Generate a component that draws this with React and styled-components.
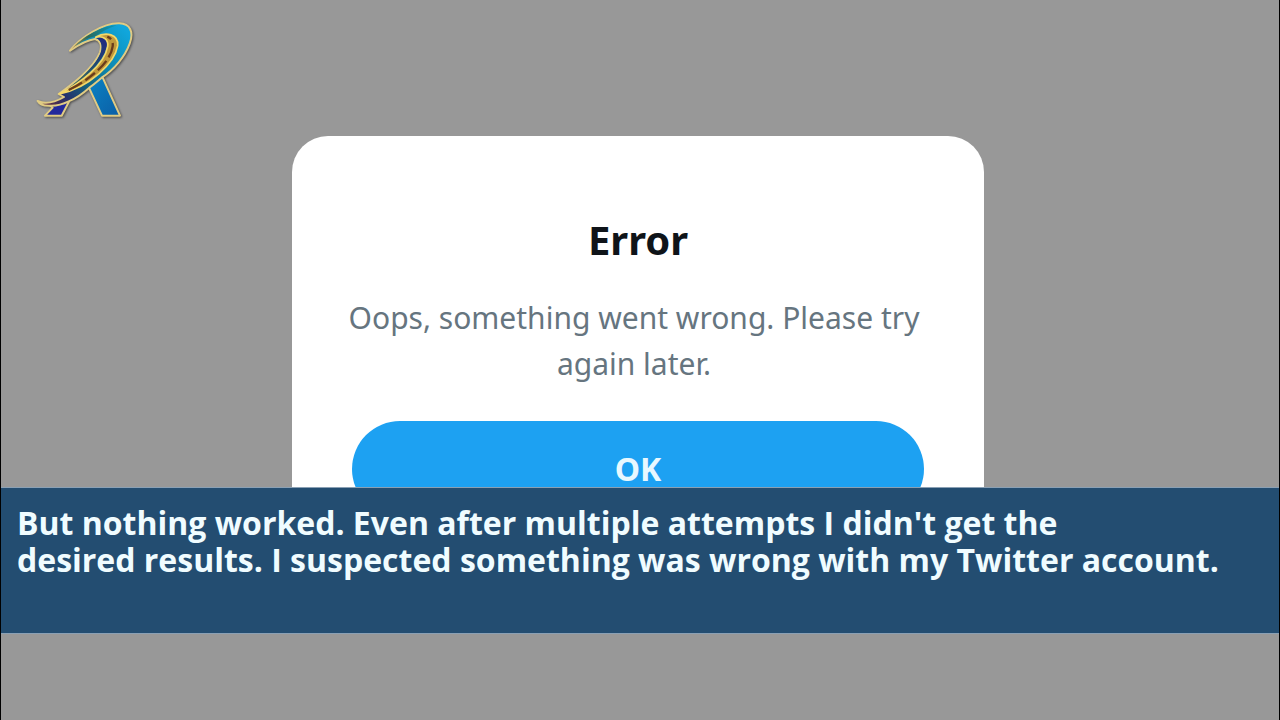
import styled, { createGlobalStyle } from 'styled-components'

const GlobalStyle = createGlobalStyle`
  * {
    box-sizing: border-box;
  }

  body {
    margin: 0;
    background-color: #000000;
    font-family: "Open Sans", "Noto Sans", sans-serif;
  }
`

////////////
// SCENE //
//////////

const Scene = styled.main`
  position: relative;
  display: flex;
  align-items: center;
  justify-content: center;
  min-height: 100vh;
  margin: 0 1px;
  padding-right: 4px;
  overflow: hidden;

  background-color: #989898;
`

const Logo = styled.svg`
  position: absolute;
  top: 15px;
  left: 29px;
  width: 110px;
  height: 110px;
  filter: drop-shadow(1px 1px 1px #00000080);
`

/////////////
// DIALOG //
///////////

const Dialog = styled.section`
  display: flex;
  flex-direction: column;
  width: 692px;
  max-width: 100%;
  padding: 76px 48px 68px;

  font-family: "Noto Sans", sans-serif;
  text-align: center;
  background-color: #ffffff;
  border-radius: 36px;
`

const Title = styled.h1`
  margin: 0;
  font-size: 40px;
  font-weight: 700;
  line-height: 56px;
  color: #0f1419;
`

const Message = styled.p`
  margin: 27px 0 34px;
  padding-right: 8px;
  font-size: 30px;
  line-height: 46px;
  color: #66757f;
`

const OkButton = styled.button`
  height: 96px;
  margin: 0 12px;
  border: 0;
  border-radius: 48px;

  font-family: inherit;
  font-size: 32px;
  font-weight: 700;
  color: #e8f8ff;
  background-color: #1da1f2;
`

//////////////
// CAPTION //
////////////

const Caption = styled.p`
  position: absolute;
  right: 0;
  bottom: 86px;
  left: 0;
  min-height: 147px;
  margin: 0;
  padding: 16px;
  border: solid #8aa0b4;
  border-width: 1px 0;

  font-size: 32px;
  font-weight: 700;
  line-height: 37px;
  color: #f0fcff;
  background-color: #234d71;
`

const RoadLogo = () => {
  return (
    <Logo viewBox="0 0 330 330" role="img" aria-label="R">
      <defs>
        <linearGradient id="swoosh" gradientUnits="userSpaceOnUse" x1="290" y1="50" x2="40" y2="270">
          <stop offset="0" stopColor="#10a6dc" />
          <stop offset="0.35" stopColor="#0d87ae" />
          <stop offset="0.6" stopColor="#14607c" />
          <stop offset="0.8" stopColor="#25306c" />
          <stop offset="1" stopColor="#6a2c3c" />
        </linearGradient>
        <linearGradient id="leg" x1="0" y1="0" x2="1" y2="1">
          <stop offset="0" stopColor="#0a84c4" />
          <stop offset="1" stopColor="#0b5ea6" />
        </linearGradient>
        <linearGradient id="arc" gradientUnits="userSpaceOnUse" x1="120" y1="107" x2="240" y2="40">
          <stop offset="0" stopColor="#c08a38" />
          <stop offset="0.5" stopColor="#2a6a5c" />
          <stop offset="1" stopColor="#0f8fa8" />
        </linearGradient>
        <linearGradient id="shoulder" gradientUnits="userSpaceOnUse" x1="220" y1="75" x2="110" y2="225">
          <stop offset="0" stopColor="#202c80" />
          <stop offset="0.5" stopColor="#24506c" />
          <stop offset="1" stopColor="#5e7c48" />
        </linearGradient>
      </defs>
      <g stroke="#e0cb84" strokeWidth="6" strokeLinejoin="round">
        <path d="M174 196 L215 181 L270 302 L216 302 L174 212 Z" fill="url(#leg)" />
        <path d="M56 268 L68 278 L45 302 L95 302 L116 262 L120 246 Z" fill="#22289c" />
        <path
          d="M120 107 C150 68 220 23 268 25 C301 26 312 51 299 86 C285 125 252 164 215 188 C203 198 192 208 178 218 C158 236 138 250 116 259 C98 268 80 272 64 272 C42 274 29 269 23 258 C48 270 78 260 102 246 L86 237 C130 205 190 160 210 112 C216 92 212 76 195 72 C170 75 145 90 120 107 Z"
          fill="url(#swoosh)"
        />
      </g>
      <path
        d="M124 103 C158 65 218 31 260 31 C240 38 215 50 196 64 C170 69 146 84 124 103 Z"
        fill="url(#arc)"
      />
      <path
        d="M198 69 C217 62 235 72 231 94 C222 134 178 180 118 219 C166 178 208 138 214 104 C217 87 211 75 198 69 Z"
        fill="url(#shoulder)"
      />
      <g fill="none" strokeLinecap="round">
        <path
          d="M88 237 C150 205 224 150 233 94 C236 73 220 61 197 67 C228 48 266 58 263 92 C255 143 178 218 88 237 Z"
          fill="#c09a3c"
          stroke="#f4d768"
          strokeWidth="5"
          strokeLinejoin="round"
        />
        <path
          d="M116 225 C174 196 241 146 248 94 C250 80 244 70 232 65"
          stroke="#6a3c1c"
          strokeWidth="7"
          strokeLinecap="butt"
          strokeDasharray="46 12 36 12 38 12"
        />
      </g>
    </Logo>
  )
}

export default function App() {
  return (
    <>
      <GlobalStyle />
      <Scene>
        <RoadLogo />
        <Dialog role="dialog" aria-labelledby="error-title">
          <Title id="error-title">Error</Title>
          <Message>Oops, something went wrong. Please try again later.</Message>
          <OkButton type="button">OK</OkButton>
        </Dialog>
        <Caption>
          But nothing worked. Even after multiple attempts I didn't get the
          <br />
          desired results. I suspected something was wrong with my Twitter account.
        </Caption>
      </Scene>
    </>
  )
}
